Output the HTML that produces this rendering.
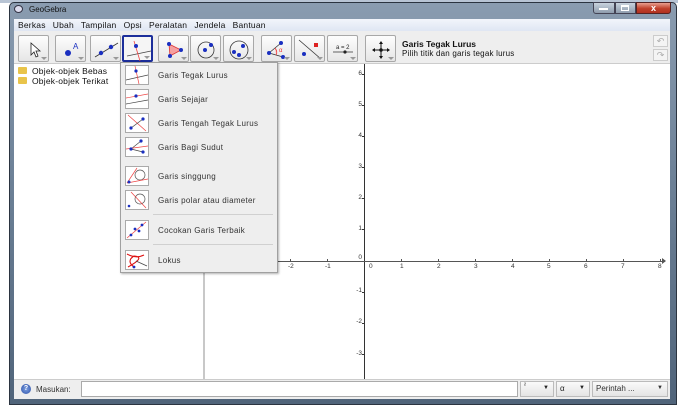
<!DOCTYPE html>
<html><head><meta charset="utf-8"><style>
*{margin:0;padding:0;box-sizing:border-box}
body{width:678px;height:407px;background:#fff;position:relative;overflow:hidden;font-family:"Liberation Sans",sans-serif;font-size:8px;color:#222}
.abs{position:absolute}
.frame{left:9px;top:2px;width:668px;height:403px;background:linear-gradient(#8a9cb0,#6f8399 40%,#50647a);border:1px solid #2b3440;border-radius:5px 5px 0 0}
.btn{position:absolute;top:35px;width:31px;height:27px;background:linear-gradient(#fdfdfd,#e6e6e6);border:1px solid #a8a8a8;border-radius:2px}
.btn svg{position:absolute;left:2px;top:2px}
.btn:after{content:"";position:absolute;right:1px;bottom:1px;border:3px solid transparent;border-top:3px solid #999;border-bottom:0}
.mi{position:absolute;left:122px;width:154px;height:22px}
.mi .ic{position:absolute;left:3px;top:0;width:24px;height:20px;background:#fff;border:1px solid #aaa}
.mi span{position:absolute;left:36px;top:6px;font-size:8px;color:#333;letter-spacing:.3px}
.yl{position:absolute;left:352px;width:10px;text-align:right;font-size:6.5px;color:#333}
.xl{position:absolute;top:263px;font-size:6.5px;color:#333}
.tx{position:absolute;top:259px;width:1px;height:3px;background:#555}
.ty{position:absolute;left:362px;width:3px;height:1px;background:#333}
</style></head><body>
<div class="abs" style="left:0;top:0;width:678px;height:3px;background:#b8c4d4"></div>
<div class="abs frame"></div>
<div class="abs" style="left:14px;top:5px;width:9px;height:8px;border:1px solid #334;border-radius:50%;background:#dde"></div>
<div class="abs" style="left:29px;top:5px;font-size:8px;color:#111">GeoGebra</div>
<div class="abs" style="left:593px;top:2px;width:22px;height:12px;background:linear-gradient(#c9d3de,#8e9cad);border:1px solid #445;border-radius:0 0 0 3px"></div>
<div class="abs" style="left:599px;top:8px;width:9px;height:2px;background:#fff"></div>
<div class="abs" style="left:615px;top:2px;width:21px;height:12px;background:linear-gradient(#c9d3de,#8e9cad);border:1px solid #445"></div>
<div class="abs" style="left:621px;top:5px;width:8px;height:6px;border:1px solid #fff;border-top-width:2px"></div>
<div class="abs" style="left:636px;top:2px;width:35px;height:12px;background:linear-gradient(#e9a090,#c0402a 55%,#b03020);border:1px solid #522;border-radius:0 0 3px 0;color:#fff;font-size:9px;font-weight:bold;text-align:center;line-height:10px">x</div>
<div class="abs" style="left:14px;top:19px;width:656px;height:12px;background:linear-gradient(#f2f5fb,#dfe6f3)"></div>
<div class="abs" style="left:18px;top:20px;font-size:8.5px;color:#111;word-spacing:1px;letter-spacing:.2px">Berkas&nbsp; Ubah&nbsp; Tampilan&nbsp; Opsi&nbsp; Peralatan&nbsp; Jendela&nbsp; Bantuan</div>
<div class="abs" style="left:14px;top:31px;width:656px;height:33px;background:#eeeeee;border-bottom:1px solid #ccc"></div>
<div class="btn" style="left:18px"><svg width="26" height="22"><path d="M10 5 L10 17 L13 14 L15 19 L17 18 L15 13 L19 13 Z" fill="#fff" stroke="#222" stroke-width="0.8"/></svg></div>
<div class="btn" style="left:55px"><svg width="26" height="22"><circle cx="10" cy="15" r="3" fill="#1a2fc0"/><text x="15" y="11" font-size="8" fill="#1a2fc0" font-family="Liberation Sans">A</text></svg></div>
<div class="btn" style="left:90px"><svg width="26" height="22"><line x1="2" y1="19" x2="25" y2="5" stroke="#333" stroke-width="0.8"/><circle cx="8" cy="15" r="2.2" fill="#1a2fc0"/><circle cx="18" cy="9" r="2.2" fill="#1a2fc0"/></svg></div>
<div class="btn" style="left:122px;border:2px solid #1c2e9a;background:#f5f5f5"><svg width="26" height="22"><line x1="1" y1="17" x2="25" y2="12" stroke="#444" stroke-width="0.8"/><line x1="8" y1="2" x2="14" y2="22" stroke="#e44" stroke-width="0.8"/><circle cx="10" cy="7" r="2" fill="#1a2fc0"/></svg></div>
<div class="btn" style="left:158px"><svg width="26" height="22"><polygon points="8,6 20,12 9,18" fill="#f5a0a0" stroke="#d33" stroke-width="0.8"/><circle cx="8" cy="6" r="2" fill="#1a2fc0"/><circle cx="20" cy="12" r="2" fill="#1a2fc0"/><circle cx="9" cy="18" r="2" fill="#1a2fc0"/></svg></div>
<div class="btn" style="left:190px"><svg width="26" height="22"><circle cx="13" cy="12" r="8" fill="none" stroke="#333" stroke-width="0.8"/><circle cx="12" cy="12" r="2" fill="#1a2fc0"/><circle cx="18" cy="7" r="2" fill="#1a2fc0"/></svg></div>
<div class="btn" style="left:223px"><svg width="26" height="22"><circle cx="13" cy="12" r="9" fill="none" stroke="#333" stroke-width="0.8"/><circle cx="8" cy="14" r="2" fill="#1a2fc0"/><circle cx="17" cy="8" r="2" fill="#1a2fc0"/><circle cx="13" cy="17" r="2" fill="#1a2fc0"/></svg></div>
<div class="btn" style="left:261px"><svg width="26" height="22"><path d="M5 15 L17 5 M5 15 L19 19" stroke="#333" stroke-width="0.8" fill="none"/><path d="M11 10 Q14 14 12 17" stroke="#e33" fill="#f8c0c0" stroke-width="0.8"/><circle cx="5" cy="15" r="2" fill="#1a2fc0"/><circle cx="17" cy="5" r="2" fill="#1a2fc0"/><circle cx="19" cy="19" r="2" fill="#1a2fc0"/><text x="15" y="14" font-size="6" fill="#e33">α</text></svg></div>
<div class="btn" style="left:294px"><svg width="26" height="22"><line x1="2" y1="2" x2="24" y2="21" stroke="#333" stroke-width="0.8"/><circle cx="7" cy="16" r="2" fill="#1a2fc0"/><rect x="17" y="5" width="4" height="4" fill="#d22"/></svg></div>
<div class="btn" style="left:327px"><svg width="26" height="22"><text x="6" y="11" font-size="6" fill="#222">a = 2</text><line x1="3" y1="14" x2="23" y2="14" stroke="#333" stroke-width="0.8"/><circle cx="15" cy="14" r="1.6" fill="#222"/></svg></div>
<div class="btn" style="left:365px"><svg width="26" height="22"><path d="M13 4 V20 M5 12 H21" stroke="#111" stroke-width="1"/><path d="M13 3 l-2 3 h4z M13 21 l-2 -3 h4z M4 12 l3 -2 v4z M22 12 l-3 -2 v4z" fill="#111"/><circle cx="13" cy="12" r="1.8" fill="#111"/></svg></div>
<div class="abs" style="left:402px;top:39px;font-size:8.5px;font-weight:bold;color:#111">Garis Tegak Lurus</div>
<div class="abs" style="left:402px;top:49px;font-size:8px;color:#111;letter-spacing:.2px">Pilih titik dan garis tegak lurus</div>
<div class="abs" style="left:653px;top:35px;width:15px;height:12px;border:1px solid #ccc;background:#f4f4f4;color:#aaa;font-size:9px;text-align:center;line-height:10px">↶</div>
<div class="abs" style="left:653px;top:49px;width:15px;height:12px;border:1px solid #ccc;background:#f4f4f4;color:#aaa;font-size:9px;text-align:center;line-height:10px">↷</div>
<div class="abs" style="left:14px;top:64px;width:189px;height:315px;background:#fff"></div>
<div class="abs" style="left:203px;top:64px;width:2px;height:315px;background:#c8c8c8"></div>
<div class="abs" style="left:205px;top:64px;width:465px;height:315px;background:#fff"></div>
<div class="abs" style="left:18px;top:67px;width:9px;height:7px;background:#e9c44a;border-radius:1px"></div>
<div class="abs" style="left:18px;top:77px;width:9px;height:7px;background:#e9c44a;border-radius:1px"></div>
<div class="abs" style="left:32px;top:66px;font-size:8.5px;color:#111;letter-spacing:.2px">Objek-objek Bebas</div>
<div class="abs" style="left:32px;top:76px;font-size:8.5px;color:#111;letter-spacing:.2px">Objek-objek Terikat</div>
<div class="abs" style="left:364px;top:64px;width:1px;height:315px;background:#333"></div>
<div class="abs" style="left:205px;top:261px;width:460px;height:1px;background:#555"></div>
<div class="abs" style="left:662px;top:258px;border:3px solid transparent;border-left:4px solid #555"></div>
<div class="tx" style="left:290px"></div><div class="tx" style="left:327px"></div><div class="tx" style="left:401px"></div><div class="tx" style="left:438px"></div><div class="tx" style="left:475px"></div><div class="tx" style="left:512px"></div><div class="tx" style="left:549px"></div><div class="tx" style="left:586px"></div><div class="tx" style="left:623px"></div><div class="tx" style="left:660px"></div>
<div class="ty" style="top:74px"></div><div class="ty" style="top:105px"></div><div class="ty" style="top:136px"></div><div class="ty" style="top:167px"></div><div class="ty" style="top:198px"></div><div class="ty" style="top:229px"></div><div class="ty" style="top:292px"></div><div class="ty" style="top:323px"></div><div class="ty" style="top:354px"></div>
<div class="yl" style="top:70px">6</div><div class="yl" style="top:101px">5</div><div class="yl" style="top:132px">4</div><div class="yl" style="top:163px">3</div><div class="yl" style="top:194px">2</div><div class="yl" style="top:225px">1</div><div class="yl" style="top:254px">0</div><div class="yl" style="top:287px">-1</div><div class="yl" style="top:318px">-2</div><div class="yl" style="top:350px">-3</div>
<div class="xl" style="left:288px">-2</div><div class="xl" style="left:325px">-1</div><div class="xl" style="left:369px">0</div><div class="xl" style="left:400px">1</div><div class="xl" style="left:437px">2</div><div class="xl" style="left:474px">3</div><div class="xl" style="left:511px">4</div><div class="xl" style="left:547px">5</div><div class="xl" style="left:584px">6</div><div class="xl" style="left:621px">7</div><div class="xl" style="left:658px">8</div>
<div class="abs" style="left:120px;top:62px;width:158px;height:211px;background:#eeeeee;border:1px solid #a0a0a0;box-shadow:1px 1px 2px rgba(0,0,0,.3)"></div>
<div class="mi" style="top:65px"><div class="ic"><svg width="22" height="18"><line x1="0" y1="14" x2="22" y2="9" stroke="#444" stroke-width=".7"/><line x1="9" y1="0" x2="13" y2="18" stroke="#e44" stroke-width=".7"/><circle cx="10" cy="5" r="1.6" fill="#1a2fc0"/></svg></div><span>Garis Tegak Lurus</span></div>
<div class="mi" style="top:89px"><div class="ic"><svg width="22" height="18"><line x1="0" y1="8" x2="22" y2="4" stroke="#e44" stroke-width=".7"/><line x1="0" y1="14" x2="22" y2="10" stroke="#444" stroke-width=".7"/><circle cx="10" cy="6" r="1.6" fill="#1a2fc0"/></svg></div><span>Garis Sejajar</span></div>
<div class="mi" style="top:113px"><div class="ic"><svg width="22" height="18"><line x1="2" y1="1" x2="20" y2="17" stroke="#e44" stroke-width=".7"/><line x1="5" y1="14" x2="17" y2="5" stroke="#444" stroke-width=".7"/><circle cx="5" cy="14" r="1.6" fill="#1a2fc0"/><circle cx="17" cy="5" r="1.6" fill="#1a2fc0"/></svg></div><span>Garis Tengah Tegak Lurus</span></div>
<div class="mi" style="top:137px"><div class="ic"><svg width="22" height="18"><path d="M5 11 L15 3 M5 11 L17 14" stroke="#444" stroke-width=".7" fill="none"/><line x1="0" y1="11" x2="22" y2="8" stroke="#e44" stroke-width=".7"/><circle cx="5" cy="11" r="1.6" fill="#1a2fc0"/><circle cx="15" cy="3" r="1.6" fill="#1a2fc0"/><circle cx="17" cy="14" r="1.6" fill="#1a2fc0"/></svg></div><span>Garis Bagi Sudut</span></div>
<div class="mi" style="top:166px"><div class="ic"><svg width="22" height="18"><circle cx="14" cy="8" r="5" fill="none" stroke="#555" stroke-width=".7"/><path d="M1 16 L11 1 M1 16 L22 12" stroke="#e44" stroke-width=".7"/><circle cx="3" cy="15" r="1.5" fill="#1a2fc0"/></svg></div><span>Garis singgung</span></div>
<div class="mi" style="top:190px"><div class="ic"><svg width="22" height="18"><circle cx="14" cy="8" r="5" fill="none" stroke="#555" stroke-width=".7"/><line x1="5" y1="1" x2="20" y2="17" stroke="#e44" stroke-width=".7"/><circle cx="3" cy="15" r="1.3" fill="#1a2fc0"/></svg></div><span>Garis polar atau diameter</span></div>
<div class="abs" style="left:153px;top:214px;width:120px;height:1px;background:#d0d0d0"></div>
<div class="mi" style="top:220px"><div class="ic"><svg width="22" height="18"><line x1="1" y1="17" x2="20" y2="1" stroke="#e44" stroke-width=".7"/><circle cx="5" cy="14" r="1.4" fill="#1a2fc0"/><circle cx="9" cy="8" r="1.4" fill="#1a2fc0"/><circle cx="13" cy="10" r="1.4" fill="#1a2fc0"/><circle cx="16" cy="4" r="1.4" fill="#1a2fc0"/></svg></div><span>Cocokan Garis Terbaik</span></div>
<div class="abs" style="left:153px;top:244px;width:120px;height:1px;background:#d0d0d0"></div>
<div class="mi" style="top:250px"><div class="ic"><svg width="22" height="18"><path d="M1 3 Q10 8 18 4 M2 16 Q20 6 8 5 Q0 10 8 16" stroke="#d11" stroke-width="1.1" fill="none"/><line x1="10" y1="10" x2="21" y2="15" stroke="#444" stroke-width=".7"/><circle cx="8" cy="16" r="1.4" fill="#1a2fc0"/></svg></div><span>Lokus</span></div>
<div class="abs" style="left:14px;top:379px;width:656px;height:20px;background:#eeeeee;border-top:1px solid #ccc"></div>
<div class="abs" style="left:21px;top:384px;width:10px;height:10px;border-radius:50%;background:radial-gradient(#7ea0e0,#2a4fa8);color:#fff;font-size:7px;text-align:center;line-height:10px;font-weight:bold">?</div>
<div class="abs" style="left:36px;top:385px;font-size:8px;color:#333">Masukan:</div>
<div class="abs" style="left:81px;top:381px;width:437px;height:16px;background:#fff;border:1px solid #aaa"></div>
<div class="abs" style="left:520px;top:381px;width:34px;height:16px;background:linear-gradient(#fafafa,#e4e4e4);border:1px solid #bbb;font-size:6px;padding:1px 3px">²<span style="position:absolute;right:4px;top:3px;font-size:6px">▼</span></div>
<div class="abs" style="left:556px;top:381px;width:34px;height:16px;background:linear-gradient(#fafafa,#e4e4e4);border:1px solid #bbb;font-size:8px;padding:2px 3px">α<span style="position:absolute;right:4px;top:3px;font-size:6px">▼</span></div>
<div class="abs" style="left:592px;top:381px;width:76px;height:16px;background:linear-gradient(#fafafa,#e4e4e4);border:1px solid #bbb;font-size:8px;padding:2px 3px;color:#333">Perintah ...<span style="position:absolute;right:4px;top:3px;font-size:6px">▼</span></div>
</body></html>
